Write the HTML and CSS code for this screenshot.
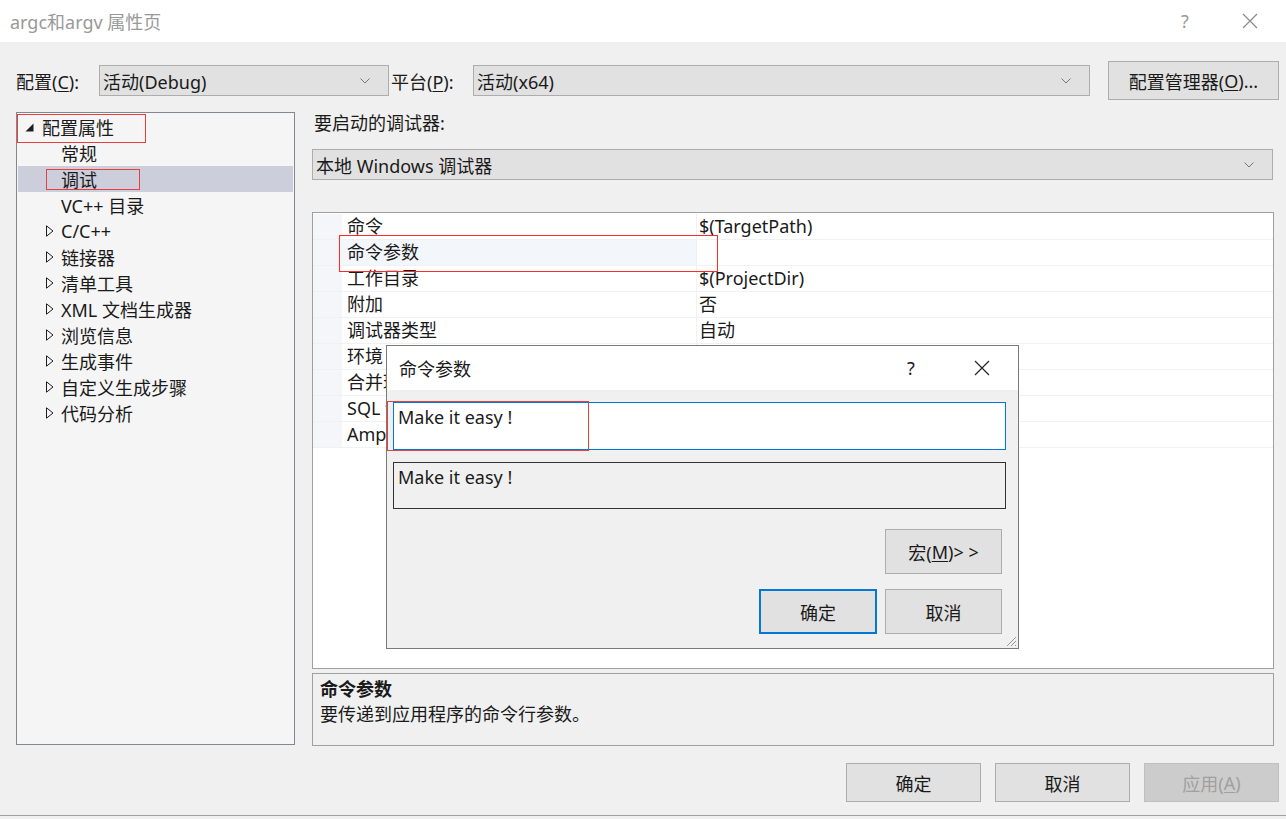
FILE: index.html
```html
<!DOCTYPE html>
<html lang="zh-CN">
<head>
<meta charset="utf-8">
<title>argc和argv 属性页</title>
<link rel="stylesheet" href="styles.css">
</head>
<body>
<div class="window">
  <div class="titlebar">
    <div class="title">argc和argv 属性页</div>
    <div class="tb-help">?</div>
    <div class="tb-close">
      <svg width="16" height="16" viewBox="0 0 16 16"><path d="M1 1L15 15M15 1L1 15" stroke="#8a8a8a" stroke-width="1.2" fill="none"/></svg>
    </div>
  </div>

  <div class="main">
    <div class="toprow">
      <div class="lbl lbl-config">配置(<u>C</u>):</div>
      <div class="combo combo-config"><span>活动(Debug)</span>
        <svg class="chev" width="10" height="6" viewBox="0 0 10 6"><path d="M0.5 0.5L5 5L9.5 0.5" stroke="#777" fill="none"/></svg></div>
      <div class="lbl lbl-platform">平台(<u>P</u>):</div>
      <div class="combo combo-platform"><span>活动(x64)</span>
        <svg class="chev" width="10" height="6" viewBox="0 0 10 6"><path d="M0.5 0.5L5 5L9.5 0.5" stroke="#777" fill="none"/></svg></div>
      <div class="btn btn-cfgmgr">配置管理器(<u>O</u>)...</div>
    </div>

    <div class="content">
      <div class="tree">
        <div class="tnode root">
          <svg class="tri-open" width="9" height="9" viewBox="0 0 9 9"><path d="M8.5 0.5V8.5H0.5Z" fill="#1e1e1e"/></svg>
          <span>配置属性</span>
        </div>
        <div class="tnode child leaf"><span>常规</span></div>
        <div class="tnode child leaf selected"><span>调试</span></div>
        <div class="tnode child leaf"><span>VC++ 目录</span></div>
        <div class="tnode child"><svg class="tri" width="8" height="12" viewBox="0 0 8 12"><path d="M0.5 0.8V11.2L7 6Z" fill="none" stroke="#1e1e1e"/></svg><span>C/C++</span></div>
        <div class="tnode child"><svg class="tri" width="8" height="12" viewBox="0 0 8 12"><path d="M0.5 0.8V11.2L7 6Z" fill="none" stroke="#1e1e1e"/></svg><span>链接器</span></div>
        <div class="tnode child"><svg class="tri" width="8" height="12" viewBox="0 0 8 12"><path d="M0.5 0.8V11.2L7 6Z" fill="none" stroke="#1e1e1e"/></svg><span>清单工具</span></div>
        <div class="tnode child"><svg class="tri" width="8" height="12" viewBox="0 0 8 12"><path d="M0.5 0.8V11.2L7 6Z" fill="none" stroke="#1e1e1e"/></svg><span>XML 文档生成器</span></div>
        <div class="tnode child"><svg class="tri" width="8" height="12" viewBox="0 0 8 12"><path d="M0.5 0.8V11.2L7 6Z" fill="none" stroke="#1e1e1e"/></svg><span>浏览信息</span></div>
        <div class="tnode child"><svg class="tri" width="8" height="12" viewBox="0 0 8 12"><path d="M0.5 0.8V11.2L7 6Z" fill="none" stroke="#1e1e1e"/></svg><span>生成事件</span></div>
        <div class="tnode child"><svg class="tri" width="8" height="12" viewBox="0 0 8 12"><path d="M0.5 0.8V11.2L7 6Z" fill="none" stroke="#1e1e1e"/></svg><span>自定义生成步骤</span></div>
        <div class="tnode child"><svg class="tri" width="8" height="12" viewBox="0 0 8 12"><path d="M0.5 0.8V11.2L7 6Z" fill="none" stroke="#1e1e1e"/></svg><span>代码分析</span></div>
        <div class="mark mark-root"></div>
        <div class="mark mark-debug"></div>
      </div>

      <div class="right">
        <div class="dbg-label">要启动的调试器:</div>
        <div class="combo combo-debugger"><span>本地 Windows 调试器</span>
          <svg class="chev" width="10" height="6" viewBox="0 0 10 6"><path d="M0.5 0.5L5 5L9.5 0.5" stroke="#777" fill="none"/></svg></div>

        <div class="grid">
          <div class="rows">
            <div class="row"><div class="gut"></div><div class="name">命令</div><div class="val">$(TargetPath)</div></div>
            <div class="row sel"><div class="gut"></div><div class="name">命令参数</div><div class="val"></div></div>
            <div class="row"><div class="gut"></div><div class="name">工作目录</div><div class="val">$(ProjectDir)</div></div>
            <div class="row"><div class="gut"></div><div class="name">附加</div><div class="val">否</div></div>
            <div class="row"><div class="gut"></div><div class="name">调试器类型</div><div class="val">自动</div></div>
            <div class="row"><div class="gut"></div><div class="name">环境</div><div class="val"></div></div>
            <div class="row"><div class="gut"></div><div class="name">合并环境</div><div class="val">是</div></div>
            <div class="row"><div class="gut"></div><div class="name">SQL 调试</div><div class="val">否</div></div>
            <div class="row"><div class="gut"></div><div class="name">Amp 默认加速器</div><div class="val">WARP 软件加速器</div></div>
          </div>
          <div class="mark mark-arg"></div>

          <div class="dialog">
            <div class="dlg-title">
              <div class="dlg-name">命令参数</div>
              <div class="dlg-help">?</div>
              <div class="dlg-close">
                <svg width="16" height="16" viewBox="0 0 16 16"><path d="M1 1L15 15M15 1L1 15" stroke="#222" stroke-width="1.2" fill="none"/></svg>
              </div>
            </div>
            <div class="dlg-body">
              <div class="edit">Make it easy !</div>
              <div class="preview">Make it easy !</div>
              <div class="dlg-macro"><div class="btn btn-dlg">宏(<u>M</u>)&gt; &gt;</div></div>
              <div class="dlg-actions">
                <div class="btn btn-dlg default">确定</div>
                <div class="btn btn-dlg">取消</div>
              </div>
              <svg class="grip" width="12" height="12" viewBox="0 0 12 12"><path d="M11 2L2 11M11 6L6 11M11 10L10 11" stroke="#999" stroke-width="1"/></svg>
            </div>
            <div class="mark mark-edit"></div>
          </div>
        </div>

        <div class="desc">
          <div class="desc-title">命令参数</div>
          <div class="desc-text">要传递到应用程序的命令行参数。</div>
        </div>
      </div>
    </div>

    <div class="actions">
      <div class="btn btn-main">确定</div>
      <div class="btn btn-main">取消</div>
      <div class="btn btn-main disabled">应用(<u>A</u>)</div>
    </div>
  </div>
  <div class="bottom-edge"></div>
</div>
</body>
</html>
```

FILE: styles.css
```css
* { box-sizing: border-box; }

html, body {
  margin: 0;
  padding: 0;
}

body {
  width: 1286px;
  height: 819px;
  overflow: hidden;
  background: #f0f0f0;
  font-family: "Noto Sans", "Noto Sans CJK SC", sans-serif;
  font-size: 18px;
  color: #1a1a1a;
}

u { text-decoration: underline; text-underline-offset: 2px; text-decoration-thickness: 1px; }

.window {
  width: 1286px;
  height: 819px;
  display: flex;
  flex-direction: column;
}

/* title bar */
.titlebar {
  height: 42px;
  background: #ffffff;
  display: flex;
  align-items: center;
  padding-left: 10px;
}
.title {
  flex: 1;
  color: #999999;
  font-size: 18px;
}
.tb-help {
  width: 40px;
  color: #9a9a9a;
  font-size: 18px;
  margin-right: 33px;
  text-align: center;
}
.tb-close {
  width: 24px;
  margin-right: 24px;
  display: flex;
  align-items: center;
  justify-content: center;
}

.main {
  flex: 1;
  display: flex;
  flex-direction: column;
  padding-left: 16px;
}

/* top row */
.toprow {
  margin-top: 19px;
  height: 39px;
  display: flex;
  align-items: center;
}
.lbl { white-space: nowrap; }
.lbl-config { width: 83px; }
.lbl-platform { width: 82px; margin-left: 2px; }

.combo {
  height: 31px;
  background: #e1e1e1;
  border: 1px solid #adadad;
  display: flex;
  align-items: center;
  padding-left: 3px;
  padding-right: 18px;
  position: relative;
}
.combo span { flex: 1; white-space: nowrap; }
.combo-config { width: 290px; }
.combo-platform { width: 617px; }
.combo-debugger { width: 961px; margin-top: 15px; }

.btn {
  background: #e1e1e1;
  border: 1px solid #adadad;
  display: flex;
  align-items: center;
  justify-content: center;
  white-space: nowrap;
}
.btn-cfgmgr {
  margin-left: 18px;
  width: 171px;
  height: 39px;
}

/* content */
.content {
  margin-top: 12px;
  display: flex;
  gap: 17px;
}

.tree {
  width: 279px;
  height: 633px;
  background: #f5f5f5;
  border: 1px solid #828790;
  padding: 1px 1px 0 1px;
  position: relative;
}
.tnode {
  height: 26px;
  display: flex;
  align-items: center;
  white-space: nowrap;
}
.tnode.root { padding-left: 7px; }
.tnode.root .tri-open { margin-right: 8px; margin-top: 1px; }
.tnode.child { padding-left: 28px; }
.tnode.child .tri { margin-right: 7px; }
.tnode.leaf { padding-left: 43px; }
.tnode.selected { background: #cccedb; }

.mark {
  position: absolute;
  border: 1px solid #e8403c;
  background: transparent;
  pointer-events: none;
  z-index: 5;
}
.mark-root { left: 0; top: 1px; width: 129px; height: 29px; }
.mark-debug { left: 29px; top: 56px; width: 94px; height: 21px; }

.right {
  width: 962px;
  display: flex;
  flex-direction: column;
}
.dbg-label {
  height: 22px;
  line-height: 22px;
  padding-left: 2px;
}

/* property grid */
.grid {
  margin-top: 32px;
  height: 457px;
  width: 962px;
  background: #ffffff;
  border: 1px solid #a0a0a0;
  padding-top: 1px;
  position: relative;
}
.row {
  height: 26px;
  display: flex;
  border-bottom: 1px solid #eff1f5;
}
.gut {
  width: 29px;
  background: #f4f6fa;
}
.name {
  width: 355px;
  padding-left: 5px;
  line-height: 25px;
  border-right: 1px solid #eff1f5;
  white-space: nowrap;
  overflow: hidden;
}
.val {
  flex: 1;
  padding-left: 2px;
  line-height: 25px;
  white-space: nowrap;
}
.row.sel .name { background: #f3f6fa; }
.mark.mark-arg {
  left: 26px; top: 22px; width: 379px; height: 37px;
  border-color: #ff2a2a;
}

/* modal dialog */
.dialog {
  position: absolute;
  left: 73px;
  top: 132px;
  width: 633px;
  height: 304px;
  border: 1px solid #7a7a7a;
  background: #f0f0f0;
  display: flex;
  flex-direction: column;
  z-index: 6;
}
.dlg-title {
  height: 44px;
  background: #ffffff;
  display: flex;
  align-items: center;
  padding-left: 12px;
}
.dlg-name { flex: 1; }
.dlg-help {
  width: 20px;
  text-align: center;
  margin-right: 51px;
  font-size: 18px;
}
.dlg-close {
  width: 20px;
  margin-right: 26px;
  display: flex;
  justify-content: center;
}
.dlg-body {
  flex: 1;
  padding: 12px 16px 0 6px;
  display: flex;
  flex-direction: column;
  position: relative;
}
.edit {
  height: 48px;
  background: #ffffff;
  border: 1px solid #0078d7;
  padding: 2px 4px;
  line-height: 24px;
  margin-right: -4px;
}
.preview {
  margin-top: 12px;
  height: 47px;
  background: #f0f0f0;
  border: 1px solid #333333;
  padding: 2px 4px;
  line-height: 24px;
  margin-right: -4px;
}
.dlg-macro {
  margin-top: 20px;
  display: flex;
  justify-content: flex-end;
}
.btn-dlg {
  width: 117px;
  height: 45px;
}
.btn-dlg.default {
  border: 2px solid #0078d7;
  width: 118px;
}
.dlg-actions {
  margin-top: 15px;
  display: flex;
  justify-content: flex-end;
  gap: 8px;
}
.grip {
  position: absolute;
  right: 1px;
  bottom: 1px;
}
.mark-edit { left: 0; top: 55px; width: 202px; height: 50px; }

/* description */
.desc {
  margin-top: 4px;
  height: 73px;
  border: 1px solid #a0a0a0;
  background: #f0f0f0;
  padding: 3px 7px;
}
.desc-title {
  font-weight: bold;
  line-height: 24px;
}
.desc-text {
  line-height: 26px;
}

/* bottom buttons */
.actions {
  margin-top: 17px;
  display: flex;
  justify-content: flex-end;
  padding-right: 7px;
  gap: 14px;
}
.btn-main {
  width: 135px;
  height: 39px;
}
.btn-main.disabled {
  background: #cccccc;
  border-color: #bfbfbf;
  color: #a0a0a0;
}

.bottom-edge {
  height: 4px;
  border-top: 1px solid #a0a0a0;
  background: #f0f0f0;
}
```
